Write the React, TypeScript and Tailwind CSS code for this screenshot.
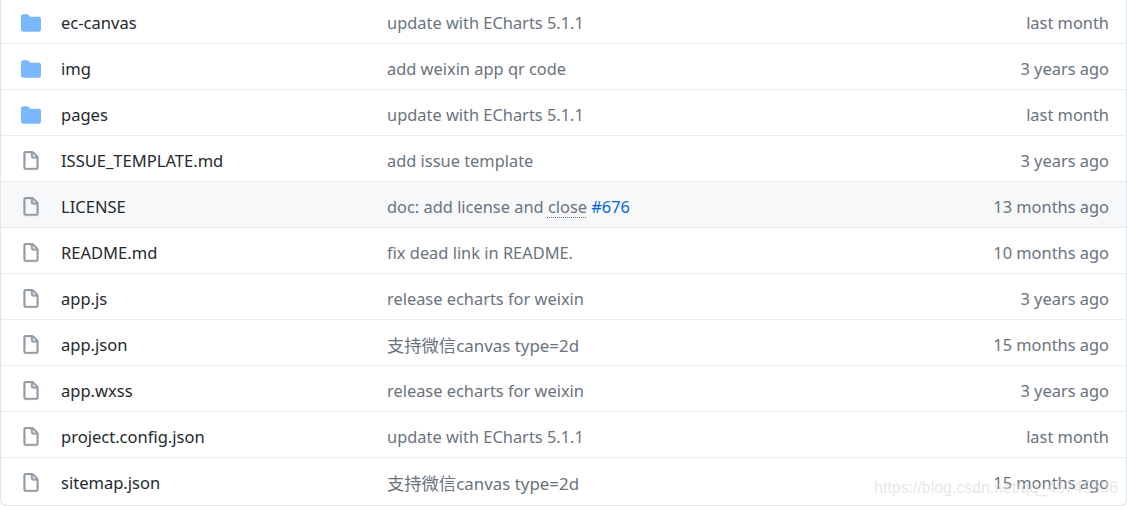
const rows = [
  { name: 'ec-canvas', dir: true, msg: 'update with ECharts 5.1.1', age: 'last month' },
  { name: 'img', dir: true, msg: 'add weixin app qr code', age: '3 years ago' },
  { name: 'pages', dir: true, msg: 'update with ECharts 5.1.1', age: 'last month' },
  { name: 'ISSUE_TEMPLATE.md', msg: 'add issue template', age: '3 years ago' },
  { name: 'LICENSE', msg: 'doc: add license and', close: true, age: '13 months ago', hover: true },
  { name: 'README.md', msg: 'fix dead link in README.', age: '10 months ago' },
  { name: 'app.js', msg: 'release echarts for weixin', age: '3 years ago' },
  { name: 'app.json', cjk: '支持微信', msg: 'canvas type=2d', age: '15 months ago' },
  { name: 'app.wxss', msg: 'release echarts for weixin', age: '3 years ago' },
  { name: 'project.config.json', msg: 'update with ECharts 5.1.1', age: 'last month' },
  { name: 'sitemap.json', cjk: '支持微信', msg: 'canvas type=2d', age: '15 months ago' },
];

function FolderIcon() {
  return (
    <svg width="20" height="20" viewBox="0 0 16 16" fill="#79b8ff">
      <path d="M1.75 1A1.75 1.75 0 0 0 0 2.75v10.5C0 14.216.784 15 1.75 15h12.5A1.75 1.75 0 0 0 16 13.25v-8.5A1.75 1.75 0 0 0 14.25 3H7.5a.25.25 0 0 1-.2-.1l-.9-1.2C6.07 1.26 5.55 1 5 1H1.75z" />
    </svg>
  );
}

function FileIcon() {
  return (
    <svg width="20" height="20" viewBox="0 0 16 16" fill="#959da5" stroke="#959da5" strokeWidth="0.25">
      <path
        fillRule="evenodd"
        d="M3.75 1.5a.25.25 0 0 0-.25.25v11.5c0 .138.112.25.25.25h8.5a.25.25 0 0 0 .25-.25V6H9.75A1.75 1.75 0 0 1 8 4.25V1.5H3.75zm5.75.56v2.19c0 .138.112.25.25.25h2.19L9.5 2.06zM2 1.75C2 .784 2.784 0 3.75 0h5.086c.464 0 .909.184 1.237.513l3.414 3.414c.329.328.513.773.513 1.237v8.086A1.75 1.75 0 0 1 12.25 15h-8.5A1.75 1.75 0 0 1 2 13.25V1.75z"
      />
    </svg>
  );
}

export default function App() {
  return (
    <div className="relative w-[1127px] h-[506px] overflow-hidden bg-white font-['Noto_Sans','Noto_Sans_CJK_SC',sans-serif] text-[16.4px]">
      <div className="h-[506px] rounded-b-md border-x border-b border-[#e1e4e8]">
        {rows.map((row, i) => (
          <div
            key={row.name}
            className={`flex items-center border-b border-[#eaecef] last:border-transparent ${i === 0 ? 'h-[44px] pt-[2px]' : 'h-[46px] pt-1'} ${row.hover ? 'bg-[#f6f8fa]' : ''}`}
          >
            <div className="w-[60px] pl-[20px] flex items-center shrink-0">
              {row.dir ? <FolderIcon /> : <FileIcon />}
            </div>
            <div className="w-[326px] shrink-0 pt-[2px] text-[16.55px] text-[#24292e]">{row.name}</div>
            <div className={`flex-1 pt-[2px] text-[#6a737d] ${row.cjk ? 'text-[16.9px]' : ''}`}>
              {row.cjk && <span className="text-[17.3px]">{row.cjk}</span>}
              {row.msg}
              {row.close && (
                <>
                  {' '}
                  <span className="underline decoration-dotted decoration-1 underline-offset-4">close</span>{' '}
                  <span className="text-[#0366d6]">#676</span>
                </>
              )}
            </div>
            <div className="pr-[17px] pt-[2px] text-right text-[#6a737d]">{row.age}</div>
          </div>
        ))}
      </div>
      <div className="absolute right-[9px] bottom-[6px] text-[15.9px] text-[#dcdcdc]/70 font-['Liberation_Sans',sans-serif]">
        https://blog.csdn.net/qq_45745836
      </div>
    </div>
  );
}
